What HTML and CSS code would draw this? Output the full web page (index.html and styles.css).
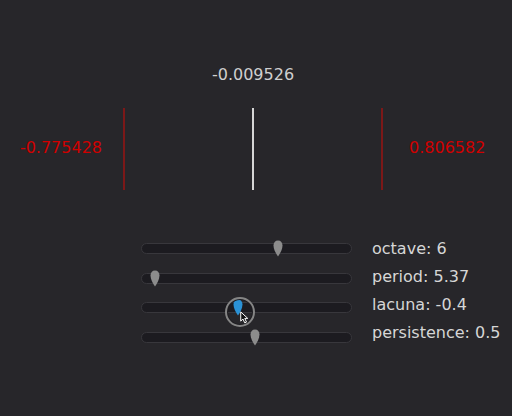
FILE: index.html
```html
<!DOCTYPE html>
<html>
<head>
<meta charset="utf-8">
<link rel="stylesheet" href="styles.css">
</head>
<body>
<main class="app">
  <div class="readout">-0.009526</div>
  <div class="meter">
    <span class="bound bound-min">-0.775428</span>
    <span class="tick tick-edge"></span>
    <span class="tick tick-mid"></span>
    <span class="tick tick-edge"></span>
    <span class="bound bound-max">0.806582</span>
  </div>
  <div class="controls">
    <div class="tracks">
      <div class="track"><span class="thumb" style="left:64.9%"><svg viewBox="0 0 10 17" width="10" height="17"><path d="M5 0.5C7.8 0.5 9.5 2.6 9.5 5.6C9.5 9.4 7.2 13.4 5 16.5C2.8 13.4 0.5 9.4 0.5 5.6C0.5 2.6 2.2 0.5 5 0.5Z"/></svg></span></div>
      <div class="track"><span class="thumb" style="left:6.2%"><svg viewBox="0 0 10 17" width="10" height="17"><path d="M5 0.5C7.8 0.5 9.5 2.6 9.5 5.6C9.5 9.4 7.2 13.4 5 16.5C2.8 13.4 0.5 9.4 0.5 5.6C0.5 2.6 2.2 0.5 5 0.5Z"/></svg></span></div>
      <div class="track"><span class="thumb thumb-active" style="left:46%"><svg viewBox="0 0 10 17" width="10" height="17"><path d="M5 0.5C7.8 0.5 9.5 2.6 9.5 5.6C9.5 9.4 7.2 13.4 5 16.5C2.8 13.4 0.5 9.4 0.5 5.6C0.5 2.6 2.2 0.5 5 0.5Z"/></svg></span><span class="ring" style="left:calc(46% + 2px)"></span><svg class="cursor" style="left:calc(46% + 1.5px)" viewBox="0 0 10 14" width="9" height="13"><path d="M0.8 0.8L0.8 11L3.3 8.7L5.3 13L7.2 12.1L5.3 8L8.6 8Z"/></svg></div>
      <div class="track"><span class="thumb" style="left:54%"><svg viewBox="0 0 10 17" width="10" height="17"><path d="M5 0.5C7.8 0.5 9.5 2.6 9.5 5.6C9.5 9.4 7.2 13.4 5 16.5C2.8 13.4 0.5 9.4 0.5 5.6C0.5 2.6 2.2 0.5 5 0.5Z"/></svg></span></div>
    </div>
    <div class="labels">
      <span class="label">octave: 6</span>
      <span class="label">period: 5.37</span>
      <span class="label">lacuna: -0.4</span>
      <span class="label">persistence: 0.5</span>
    </div>
  </div>
</main>
</body>
</html>
```
FILE: styles.css
```css
html, body {
  margin: 0;
  padding: 0;
  background: #27262a;
}
body {
  width: 512px;
  height: 416px;
  overflow: hidden;
  font-family: "DejaVu Sans", "Liberation Sans", sans-serif;
  font-size: 16px;
}
.app {
  display: flex;
  flex-direction: column;
}
.readout {
  padding-top: 65px;
  padding-right: 6px;
  line-height: 20px;
  text-align: center;
  color: #cfcfcf;
}
.meter {
  display: flex;
  align-items: center;
  height: 82px;
  margin-top: 23px;
}
.bound {
  color: #d00000;
  line-height: 20px;
  margin-bottom: 3px;
}
.bound-min {
  width: 102px;
  text-align: right;
  margin-right: 21px;
}
.bound-max {
  margin-left: 26px;
}
.tick {
  width: 2px;
  align-self: stretch;
}
.tick + .tick {
  margin-left: 127px;
}
.tick-edge {
  background: #7c1818;
}
.tick-mid {
  background: #d6d6d6;
}
.controls {
  display: flex;
  align-items: flex-start;
  margin-top: 44px;
  padding-left: 141px;
}
.tracks {
  display: flex;
  flex-direction: column;
  gap: 18.5px;
  padding-top: 9px;
  width: 211px;
}
.track {
  position: relative;
  height: 11px;
  box-sizing: border-box;
  border-radius: 6px;
  background: #1c1b20;
  border: 1px solid #38373c;
}
.thumb {
  position: absolute;
  top: -4px;
  width: 10px;
  height: 17px;
  transform: translateX(-50%);
}
.thumb svg {
  display: block;
  fill: #8c8c8c;
}
.thumb-active svg {
  fill: #2b92d6;
}
.ring {
  position: absolute;
  top: -6px;
  width: 30px;
  height: 30px;
  box-sizing: border-box;
  border-radius: 50%;
  border: 2px solid #858585;
  box-shadow: inset 0 0 0 1px #1e1d21;
  transform: translateX(-50%);
}
.cursor {
  position: absolute;
  top: 8px;
  fill: #111;
  stroke: #fff;
  stroke-width: 1.1;
  stroke-linejoin: round;
}
.labels {
  display: flex;
  flex-direction: column;
  margin-left: 20px;
  padding-top: 0.5px;
}
.label {
  line-height: 28px;
  color: #d6d6d6;
  white-space: nowrap;
}
```
